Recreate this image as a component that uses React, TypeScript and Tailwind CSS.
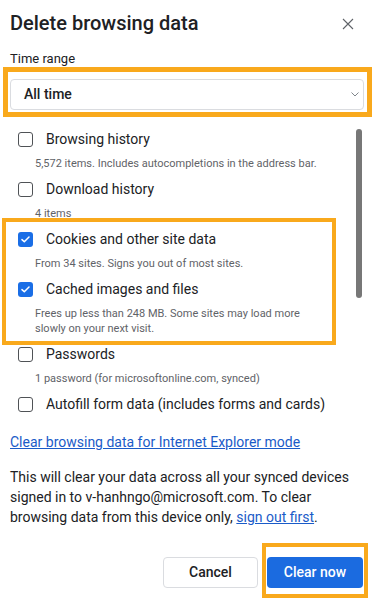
import React from 'react';

// Delete browsing data dialog, with the orange review highlights drawn over it.

const ORANGE = 'border-[#f9a91c]';

type Item = {
  label: string;
  sub: string[];
  checked: boolean;
};

const TOP_ITEMS: Item[] = [
  {
    label: 'Browsing history',
    sub: ['5,572 items. Includes autocompletions in the address bar.'],
    checked: false,
  },
  { label: 'Download history', sub: ['4 items'], checked: false },
];

const MARKED_ITEMS: Item[] = [
  {
    label: 'Cookies and other site data',
    sub: ['From 34 sites. Signs you out of most sites.'],
    checked: true,
  },
  {
    label: 'Cached images and files',
    sub: ['Frees up less than 248 MB. Some sites may load more', 'slowly on your next visit.'],
    checked: true,
  },
];

const BOTTOM_ITEMS: Item[] = [
  {
    label: 'Passwords',
    sub: ['1 password (for microsoftonline.com, synced)'],
    checked: false,
  },
  { label: 'Autofill form data (includes forms and cards)', sub: [], checked: false },
];

function Checkbox({ checked }: { checked: boolean }) {
  if (checked) {
    return (
      <span className="flex h-[15px] w-[15px] shrink-0 items-center justify-center rounded-[3px] bg-[#1a6ee6]">
        <svg width="9" height="7" viewBox="0 0 9 7" fill="none">
          <path d="M1 3.6 3.3 5.8 8 1" stroke="white" strokeWidth="1.5" strokeLinecap="round" strokeLinejoin="round" />
        </svg>
      </span>
    );
  }
  return <span className="h-[15px] w-[15px] shrink-0 rounded-[3px] border-[1.5px] border-[#4f5256] bg-white" />;
}

function DataItem({ item }: { item: Item }) {
  return (
    <div className="pb-[8px]">
      <div className="flex h-[20px] items-center">
        <Checkbox checked={item.checked} />
        <span className="ml-[13px] text-[14px] leading-[20px] text-[#202124]">{item.label}</span>
      </div>
      {item.sub.length > 0 && (
        <div className="mt-[7px] pl-[17px] text-[11px] leading-[15px] text-[#5f6368]">
          {item.sub.map((line) => (
            <div key={line}>{line}</div>
          ))}
        </div>
      )}
    </div>
  );
}

export default function App() {
  return (
    <div
      className="relative h-[601px] w-[376px] overflow-hidden bg-white px-[10px] text-[#202124]"
      style={{ fontFamily: 'Roboto, "Noto Sans", Arial, sans-serif' }}
    >
      {/* header */}
      <div className="flex items-start justify-between pt-[11px]">
        <h1 className="text-[20px] font-medium leading-[24px] text-[#202124]">Delete browsing data</h1>
        <button type="button" className="mr-[12px] mt-[7px] text-[#5f6368]" aria-label="Close">
          <svg width="12" height="12" viewBox="0 0 12 12" fill="none">
            <path d="M1 1 11 11M11 1 1 11" stroke="currentColor" strokeWidth="1.1" />
          </svg>
        </button>
      </div>

      <div className="mt-[16px] text-[13px] leading-[16px] text-[#202124]">Time range</div>

      <div className="relative mt-[12px] w-[354px]">
        <div className="flex h-[31px] items-center justify-between rounded-[4px] border border-[#dadce0] bg-white pl-[13px] pr-[4px]">
          <span className="text-[14px] font-medium text-[#202124]">All time</span>
          <svg width="8" height="5" viewBox="0 0 8 5" fill="none">
            <path d="M0.5 0.5 4 4 7.5 0.5" stroke="#80868b" strokeWidth="1" />
          </svg>
        </div>
        <div className={`pointer-events-none absolute -bottom-[7px] -left-[7px] -right-[8px] -top-[12px] border-[5px] ${ORANGE}`} />
      </div>

      {/* list of data types */}
      <div className="mt-[19px] flex">
        <div className="flex-1 pl-[8px]">
          {TOP_ITEMS.map((item) => (
            <DataItem key={item.label} item={item} />
          ))}
          <div className="relative">
            {MARKED_ITEMS.map((item) => (
              <DataItem key={item.label} item={item} />
            ))}
            <div className={`pointer-events-none absolute -left-[16px] -top-[11px] bottom-[-1px] w-[334px] border-[4px] ${ORANGE}`} />
          </div>
          {BOTTOM_ITEMS.map((item) => (
            <DataItem key={item.label} item={item} />
          ))}
        </div>
        <div className="mr-[4px] w-[6px]">
          <div className="h-[169px] rounded-full bg-[#777777]" />
        </div>
      </div>

      <a href="#" className="mt-[10px] block text-[14px] leading-[20px] text-[#1a5bc8] underline">
        Clear browsing data for Internet Explorer mode
      </a>

      <p className="mt-[15px] text-[14px] leading-[20px] text-[#202124]">
        This will clear your data across all your synced devices
        <br />
        signed in to v-hanhngo@microsoft.com. To clear
        <br />
        browsing data from this device only,{' '}
        <a href="#" className="text-[#1a5bc8] underline">
          sign out first
        </a>
        .
      </p>

      <div className="mt-[30px] flex justify-end gap-[9px] pr-[3px]">
        <button
          type="button"
          className="h-[31px] w-[95px] rounded-[4px] border border-[#dadce0] bg-white text-[14px] font-medium text-[#202124]"
        >
          Cancel
        </button>
        <div className="relative">
          <button
            type="button"
            className="h-[31px] w-[96px] rounded-[4px] bg-[#1b6be0] text-[14px] font-medium text-white"
          >
            Clear now
          </button>
          <div className={`pointer-events-none absolute -bottom-[10px] -left-[5px] -right-[5px] -top-[14px] border-[4px] ${ORANGE}`} />
        </div>
      </div>
    </div>
  );
}
